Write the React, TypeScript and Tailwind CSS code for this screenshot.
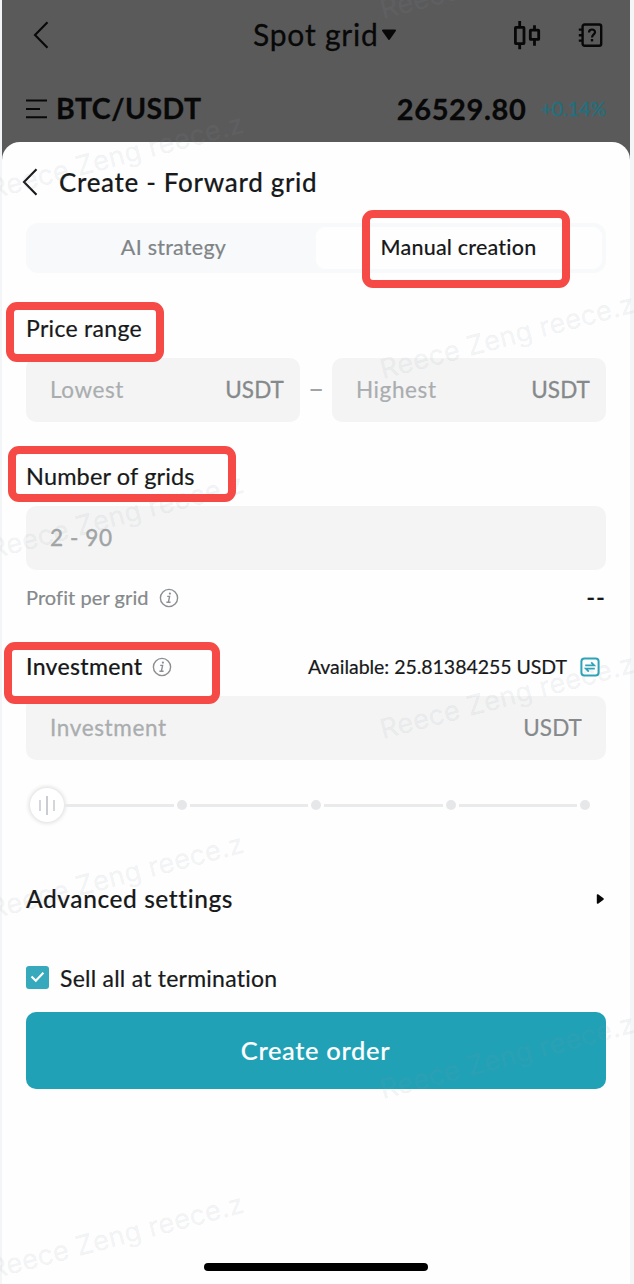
import React from "react";

function BackIcon() {
  return (
    <svg width="16" height="28" viewBox="0 0 16 28" fill="none" stroke="currentColor" strokeWidth="2.1">
      <path d="M14.5 1.3 L2 14 L14.5 26.7" />
    </svg>
  );
}

function InfoIcon() {
  return (
    <svg width="20" height="20" viewBox="0 0 20 20" fill="none" stroke="#8b8f91" strokeWidth="1.4">
      <circle cx="10" cy="10" r="8.6" />
      <path d="M8.2 8.4 H10.6 L9.4 14.2 M7.4 14.2 H11.6" />
      <circle cx="10.9" cy="5.6" r="1.1" fill="#8b8f91" stroke="none" />
    </svg>
  );
}

function Header() {
  return (
    <header className="h-[142px] text-[#080808]">
      <div className="flex h-[70px] items-center">
        <div className="w-[251px] pl-[31px]">
          <BackIcon />
        </div>
        <div className="flex w-[259px] items-center">
          <span className="pb-[2px] text-[30px] leading-none tracking-[0.8px] [-webkit-text-stroke:0.3px]">Spot grid</span>
          <svg className="ml-[2px]" width="16" height="12" viewBox="0 0 16 12">
            <path d="M2 1.5 H14 L8 10 Z" fill="currentColor" stroke="currentColor" strokeWidth="2" strokeLinejoin="round" />
          </svg>
        </div>
        <svg width="30" height="30" viewBox="0 0 30 30" fill="none" stroke="currentColor" strokeWidth="2.8">
          <rect x="3.4" y="7.4" width="8.6" height="16.2" rx="0.5" />
          <path d="M7.7 1 V7 M7.7 24 V29.2" />
          <rect x="18.3" y="10.2" width="8.4" height="9.2" rx="0.5" />
          <path d="M22.5 5.3 V10 M22.5 20 V25.8" />
        </svg>
        <svg className="ml-[36px]" width="28" height="28" viewBox="0 0 28 28" fill="none" stroke="currentColor" strokeWidth="2.4">
          <rect x="4.6" y="3.5" width="18.6" height="21.2" rx="2" />
          <path d="M0.8 8.6 H5 M0.8 14.2 H5 M0.8 19.6 H5" />
          <path d="M11 11.6 C11 7.4 17.2 7.6 17 11.4 C16.9 13.3 14 13.6 14 16.4" strokeWidth="2.2" />
          <path d="M14 18 V20.4" strokeWidth="2.4" />
        </svg>
      </div>
      <div className="flex h-[72px] items-center pt-[5px] pr-[24px] pl-[24px]">
        <svg width="22" height="20" viewBox="0 0 22 20" stroke="currentColor" strokeWidth="2">
          <path d="M0 1.6 H21 M0 10 H14 M0 18.2 H21" />
        </svg>
        <span className="ml-[8px] text-[28.5px] leading-none font-bold tracking-[0.45px] [-webkit-text-stroke:0.3px]">BTC/USDT</span>
        <span className="ml-auto pb-px text-[29px] leading-none font-bold tracking-[0.65px] [-webkit-text-stroke:0.3px]">26529.80</span>
        <span className="ml-[14px] text-[19.5px] leading-none text-[#20717f] [-webkit-text-stroke:0.3px]">+0.14%</span>
      </div>
    </header>
  );
}

function Slider() {
  return (
    <div className="flex h-[90px] items-center pl-[4px]">
      <div className="flex size-[34px] items-center justify-center gap-[5px] rounded-full bg-white shadow-[0_0_4px_1px_rgba(0,0,0,0.14)]">
        <span className="h-[11px] w-[2px] bg-[#d3d6da]" />
        <span className="h-[19px] w-[2px] bg-[#c9ccd1]" />
        <span className="h-[11px] w-[2px] bg-[#d3d6da]" />
      </div>
      <span className="h-[3px] w-[109.5px] bg-[#e9eaeb]" />
      <span className="mx-[3px] size-[10px] rounded-full bg-[#e6e7e9]" />
      <span className="h-[3px] w-[118.5px] bg-[#e9eaeb]" />
      <span className="mx-[3px] size-[10px] rounded-full bg-[#e6e7e9]" />
      <span className="h-[3px] w-[118.5px] bg-[#e9eaeb]" />
      <span className="mx-[3px] size-[10px] rounded-full bg-[#e6e7e9]" />
      <span className="h-[3px] w-[118.5px] bg-[#e9eaeb]" />
      <span className="mx-[3px] size-[10px] rounded-full bg-[#e6e7e9]" />
    </div>
  );
}

function Watermark({ className }: { className: string }) {
  return (
    <span
      className={
        "absolute origin-[0_23px] -rotate-[14.8deg] font-['Inter',sans-serif] text-[27px] leading-none tracking-[0.4px] whitespace-nowrap text-[#8a98a3]/10 [-webkit-text-stroke:0.4px] " +
        className
      }
    >
      Reece Zeng reece.z
    </span>
  );
}

export default function App() {
  return (
    <div className="relative h-[1284px] w-[634px] overflow-hidden bg-[#f4f5f6] pr-[4px] pl-[2px] font-['Lato',sans-serif] text-[#17191a]">
      <div className="h-full bg-[#5a5a5a]">
        <Header />
        <main className="flex h-[1142px] flex-col rounded-t-[18px] bg-[#fefefe] px-[24px] [-webkit-text-stroke:0.2px]">
          <div className="flex h-[81px] items-center pb-[2px]">
            <div className="-ml-[4px] w-[37px]">
              <BackIcon />
            </div>
            <h1 className="text-[26px] leading-none font-medium tracking-[0.67px] [-webkit-text-stroke:0.15px]">Create - Forward grid</h1>
          </div>

          <div className="flex h-[50px] rounded-[12px] bg-[#f7f9fb] p-[4px] text-[21.5px] leading-none">
            <div className="flex w-[286px] items-center justify-center pb-px pl-[1px] tracking-[0.25px] text-[#7f8486]">AI strategy</div>
            <div className="flex flex-1 items-center justify-center rounded-[9px] bg-[#fefefe] pr-px pb-px font-medium tracking-[0.2px] [-webkit-text-stroke:0.1px]">
              Manual creation
            </div>
          </div>

          <div className="flex h-[85px] items-center pt-[26px] text-[23px] leading-none tracking-[0.3px]">Price range</div>
          <div className="flex h-[64px] items-center text-[22.5px] leading-none">
            <div className="flex h-full w-[274px] items-center justify-between rounded-[10px] bg-[#f4f4f4] pr-[16px] pl-[24px]">
              <span className="tracking-[0.55px] text-[#a9adaf]">Lowest</span>
              <span className="tracking-[0.1px] text-[#85898b] [-webkit-text-stroke:0.3px]">USDT</span>
            </div>
            <span className="w-[32px] pb-[4px] text-center text-[28px] text-[#a0a4a6] [-webkit-text-stroke:0px]">–</span>
            <div className="flex h-full w-[274px] items-center justify-between rounded-[10px] bg-[#f4f4f4] pr-[16px] pl-[24px]">
              <span className="tracking-[0.6px] text-[#a9adaf]">Highest</span>
              <span className="tracking-[0.1px] text-[#85898b] [-webkit-text-stroke:0.3px]">USDT</span>
            </div>
          </div>

          <div className="flex h-[84px] items-center pt-[25px] text-[23.5px] leading-none tracking-[0.15px]">Number of grids</div>
          <div className="flex h-[64px] items-center rounded-[10px] bg-[#f4f4f4] px-[24px] text-[22.5px] leading-none tracking-[0.6px] text-[#a0a4a6] [-webkit-text-stroke:0.4px]">
            2 - 90
          </div>

          <div className="flex h-[56px] items-center leading-none">
            <span className="mr-[10px] pb-[2px] text-[20px] tracking-[0.08px] text-[#85898b]">Profit per grid</span>
            <InfoIcon />
            <span className="ml-auto text-[24px] font-medium tracking-[1px]">--</span>
          </div>

          <div className="flex h-[70px] items-center pt-[11px] leading-none">
            <span className="mr-[9px] text-[23px] font-medium tracking-[0.32px] [-webkit-text-stroke:0.15px]">Investment</span>
            <InfoIcon />
            <span className="mr-[13px] ml-auto text-[19.5px] tracking-[-0.03px]">Available: 25.81384255 USDT</span>
            <svg className="mr-[6px]" width="20" height="20" viewBox="0 0 20 20" fill="none" stroke="#2ba3b8">
              <rect x="1.4" y="1.4" width="17.2" height="17.2" rx="3" strokeWidth="2" />
              <path d="M5.2 8.4 H14.2 L11.2 5.4 M14.8 11.6 H5.8 L8.8 14.6" strokeWidth="1.7" />
            </svg>
          </div>
          <div className="flex h-[64px] items-center justify-between rounded-[10px] bg-[#f4f4f4] pr-[24px] pl-[24px] text-[22.5px] leading-none">
            <span className="tracking-[0.65px] text-[#a9adaf] [-webkit-text-stroke:0.3px]">Investment</span>
            <span className="tracking-[0.1px] text-[#85898b]">USDT</span>
          </div>

          <Slider />

          <div className="flex h-[98px] items-center justify-between leading-none">
            <span className="text-[24.5px] font-medium tracking-[0.57px] [-webkit-text-stroke:0.15px]">Advanced settings</span>
            <svg width="10" height="12" viewBox="0 0 10 12">
              <path d="M1.6 2 V10 L7 6 Z" fill="#080808" stroke="#080808" strokeWidth="1.6" strokeLinejoin="round" />
            </svg>
          </div>

          <div className="flex h-[64px] items-center pb-[6px] leading-none">
            <div className="flex size-[23px] items-center justify-center rounded-[3px] bg-[#37a9bd]">
              <svg width="15" height="12" viewBox="0 0 15 12" fill="none" stroke="white" strokeWidth="2.1">
                <path d="M1.5 5.6 L5.8 9.8 L13.4 1.8" />
              </svg>
            </div>
            <span className="ml-[11px] pt-[3px] text-[23px] tracking-[0.24px]">Sell all at termination</span>
          </div>

          <button className="h-[77px] shrink-0 rounded-[10px] bg-[#21a1b6] pr-px text-[25.5px] leading-none font-medium tracking-[0.65px] text-white [-webkit-text-stroke:0.15px]">
            Create order
          </button>

          <div className="mt-auto mb-[13px] h-[8px] w-[224px] self-center rounded-full bg-black" />
        </main>
      </div>

      <div className="pointer-events-none">
        <Watermark className="top-[-4px] left-[383px]" />
        <Watermark className="top-[176px] left-[-8px]" />
        <Watermark className="top-[356px] left-[383px]" />
        <Watermark className="top-[536px] left-[-8px]" />
        <Watermark className="top-[716px] left-[383px]" />
        <Watermark className="top-[896px] left-[-8px]" />
        <Watermark className="top-[1076px] left-[383px]" />
        <Watermark className="top-[1256px] left-[-8px]" />

        <div className="absolute top-[210px] left-[362px] h-[78px] w-[208px] rounded-[11px] border-8 border-[#f54a45]" />
        <div className="absolute top-[302px] left-[6px] h-[60px] w-[158px] rounded-[11px] border-8 border-[#f54a45]" />
        <div className="absolute top-[446px] left-[8px] h-[56px] w-[228px] rounded-[11px] border-8 border-[#f54a45]" />
        <div className="absolute top-[642px] left-[4px] h-[62px] w-[216px] rounded-[11px] border-8 border-[#f54a45]" />
      </div>
    </div>
  );
}
